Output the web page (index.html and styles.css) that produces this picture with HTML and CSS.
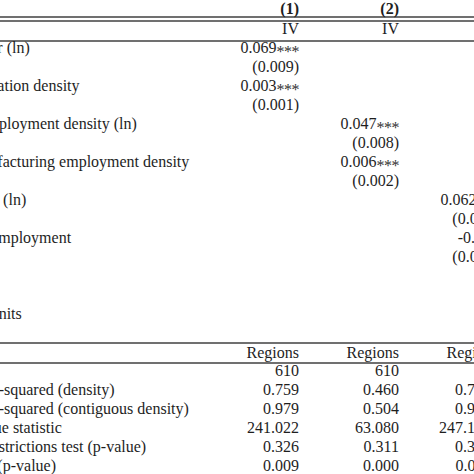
FILE: index.html
```html
<!DOCTYPE html>
<html lang="en">
<head>
<meta charset="utf-8">
<title>IV estimates</title>
<link rel="stylesheet" href="styles.css">
</head>
<body>
<div class="tbl">
  <div class="row head"><span class="lab"></span><span>(1)</span><span>(2)</span><span>(3)</span></div>
  <div class="double"></div>
  <div class="row model"><span class="lab"></span><span>IV</span><span>IV</span><span>IV</span></div>
  <div class="rule"></div>
  <div class="body">
    <div class="row"><span class="lab">Center (ln)</span><span>0.069<i class="st">***</i></span><span></span><span></span></div>
    <div class="row"><span class="lab"></span><span>(0.009)</span><span></span><span></span></div>
    <div class="row"><span class="lab">Population density</span><span>0.003<i class="st">***</i></span><span></span><span></span></div>
    <div class="row"><span class="lab"></span><span>(0.001)</span><span></span><span></span></div>
    <div class="row"><span class="lab">Unemployment density (ln)</span><span></span><span>0.047<i class="st">***</i></span><span></span></div>
    <div class="row"><span class="lab"></span><span></span><span>(0.008)</span><span></span></div>
    <div class="row"><span class="lab">Manufacturing employment density</span><span></span><span>0.006<i class="st">***</i></span><span></span></div>
    <div class="row"><span class="lab"></span><span></span><span>(0.002)</span><span></span></div>
    <div class="row"><span class="lab">Plants (ln)</span><span></span><span></span><span>0.062<i class="st">***</i></span></div>
    <div class="row"><span class="lab"></span><span></span><span></span><span>(0.007)</span></div>
    <div class="row"><span class="lab">Self-employment</span><span></span><span></span><span>-0.004</span></div>
    <div class="row"><span class="lab"></span><span></span><span></span><span>(0.003)</span></div>
    <div class="row"><span class="lab"></span><span></span><span></span><span></span></div>
    <div class="row"><span class="lab"></span><span></span><span></span><span></span></div>
    <div class="row"><span class="lab">Geo units</span><span></span><span></span><span></span></div>
    <div class="row"><span class="lab"></span><span></span><span></span><span></span></div>
  </div>
  <div class="rule"></div>
  <div class="row unit"><span class="lab">Unit</span><span>Regions</span><span>Regions</span><span>Regions</span></div>
  <div class="rule"></div>
  <div class="stats">
    <div class="row"><span class="lab">Obs.</span><span>610</span><span>610</span><span>610</span></div>
    <div class="row"><span class="lab">Adj R-squared (density)</span><span>0.759</span><span>0.460</span><span>0.7415</span></div>
    <div class="row"><span class="lab">Adj R-squared (contiguous density)</span><span>0.979</span><span>0.504</span><span>0.9689</span></div>
    <div class="row"><span class="lab">F-value statistic</span><span>241.022</span><span>63.080</span><span>247.1253</span></div>
    <div class="row"><span class="lab">AR restrictions test (p-value)</span><span>0.326</span><span>0.311</span><span>0.3048</span></div>
    <div class="row"><span class="lab">Wald (p-value)</span><span>0.009</span><span>0.000</span><span>0.0116</span></div>
  </div>
</div>
</body>
</html>
```

FILE: styles.css
```css
html, body {
  margin: 0;
  padding: 0;
  background: #ffffff;
  overflow: hidden;
}

body {
  font-family: "Liberation Serif", "DejaVu Serif", serif;
  font-size: 16px;
  color: #1e1e1e;
}

.tbl {
  margin-left: -40px;
  width: 539px;
}

.row {
  display: grid;
  grid-template-columns: 239px 100px 100px 100px;
  height: 19px;
  line-height: 19px;
  white-space: nowrap;
}

.row > span {
  text-align: right;
}

.row > .lab {
  text-align: left;
}

.st {
  font-style: normal;
  font-size: 16px;
  letter-spacing: -0.5px;
  vertical-align: -0.26em;
  line-height: 0;
  color: #333333;
}

.head {
  height: 16px;
  line-height: 18px;
  font-weight: bold;
}

.double {
  height: 2px;
  border-top: 2px solid #707070;
  border-bottom: 2px solid #707070;
}

.rule {
  height: 2px;
  background: #707070;
}

.model {
  height: 18px;
  line-height: 14px;
}

.body {
  margin-top: -4px;
}

.unit {
  margin-top: -1.5px;
}

.stats {
  margin-top: -2.5px;
}
```
